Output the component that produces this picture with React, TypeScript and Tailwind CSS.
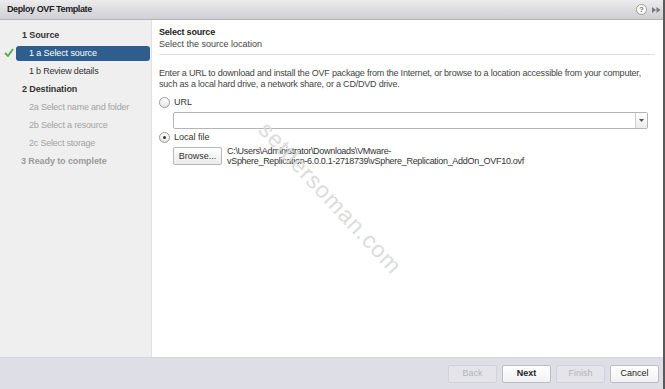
import React from "react";

const font = {
  fontFamily: '"Liberation Sans", Arial, sans-serif',
};

const steps = [
  { label: "1 Source", kind: "head" },
  { label: "1 a Select source", kind: "active" },
  { label: "1 b Review details", kind: "sub" },
  { label: "2 Destination", kind: "head" },
  { label: "2a Select name and folder", kind: "off" },
  { label: "2b Select a resource", kind: "off" },
  { label: "2c Select storage", kind: "off" },
  { label: "3 Ready to complete", kind: "headOff" },
];

const Step = ({ label, kind }: { label: string; kind: string }) => {
  if (kind === "active") {
    return (
      <div className="relative flex h-[18px] items-center">
        <svg className="absolute left-[4px] top-[4px]" width="10" height="9" viewBox="0 0 10 9">
          <path d="M1 5 L4 8 L9 1" fill="none" stroke="#4caf50" strokeWidth="1.8" />
        </svg>
        <div className="ml-[16px] flex h-[15px] w-[134px] items-center rounded-[3px] bg-[#2d5e8e] pl-[13px] tracking-[-0.1px] text-white">
          {label}
        </div>
      </div>
    );
  }
  const cls =
    kind === "head"
      ? "pl-[22px] font-bold tracking-[-0.1px] text-[#333]"
      : kind === "headOff"
        ? "pl-[21px] font-bold tracking-[-0.1px] text-[#9a9a9a]"
        : kind === "sub"
          ? "pl-[29px] tracking-[-0.2px] text-[#333]"
          : "pl-[29px] tracking-[-0.2px] text-[#a3a3a3]";
  return <div className={`flex h-[18px] items-center ${cls}`}>{label}</div>;
};

const Radio = ({ checked, label }: { checked?: boolean; label: string }) => (
  <div className="flex items-center gap-[4px]">
    <span className="flex h-[11px] w-[11px] items-center justify-center rounded-full border border-[#9a9a9a] bg-gradient-to-b from-white to-[#e6e6e6]">
      {checked && <span className="h-[3px] w-[3px] rounded-full bg-[#333]" />}
    </span>
    <span className="text-[#333]">{label}</span>
  </div>
);

const FooterButton = ({ label, disabled, bold }: { label: string; disabled?: boolean; bold?: boolean }) => (
  <div
    className={`flex h-[18px] w-[49px] items-center justify-center rounded-[2px] border ${
      disabled
        ? "border-[#d2d2da] bg-[#e4e4ea] text-[#b4b4b8]"
        : "border-[#bdbdc2] bg-gradient-to-b from-white to-[#f1f1f3] text-[#222]"
    } ${bold ? "font-bold" : ""}`}
  >
    {label}
  </div>
);

export default function App() {
  return (
    <div
      className="relative flex h-[389px] w-[665px] flex-col overflow-hidden border-r-2 border-[#5a5a5a] bg-white text-[9px] leading-[11px]"
      style={font}
    >
      {/* title bar */}
      <div className="flex h-[20px] shrink-0 items-center justify-between border-b border-[#b5b5b8] bg-gradient-to-b from-[#ececee] to-[#cfcfd4] pl-[7px] pr-[2px]">
        <span className="font-bold tracking-[-0.4px] text-[#222]">Deploy OVF Template</span>
        <div className="flex items-center gap-[5px]">
          <span className="flex h-[11px] w-[11px] items-center justify-center rounded-full border border-[#9a9a9a] bg-white text-[8px] font-bold leading-none text-[#777]">
            ?
          </span>
          <svg width="9" height="8" viewBox="0 0 9 8">
            <path d="M0 1 L4 4 L0 7 Z M4.5 1 L8.5 4 L4.5 7 Z" fill="#7a7a7a" />
          </svg>
        </div>
      </div>

      <div className="flex flex-1">
        {/* sidebar */}
        <div className="w-[152px] shrink-0 border-r border-[#e2e2e2] bg-[#efefef] pt-[6px]">
          {steps.map((s) => (
            <Step key={s.label} label={s.label} kind={s.kind} />
          ))}
        </div>

        {/* main */}
        <div className="flex-1 pl-[7px] pr-[8px] pt-[7px]">
          <div className="font-bold tracking-[-0.2px] text-[#222]">Select source</div>
          <div className="mt-[1px] text-[#444]">Select the source location</div>
          <div className="mt-[4px] border-t border-[#dedede]" />
          <p className="mt-[13px] whitespace-nowrap tracking-[-0.2px] text-[#444]">
            Enter a URL to download and install the OVF package from the Internet, or browse to a location
            accessible from your computer,
            <br />
            such as a local hard drive, a network share, or a CD/DVD drive.
          </p>
          <div className="mt-[7px]">
            <Radio label="URL" />
          </div>
          <div className="ml-[14px] mt-[4px] flex h-[17px] w-[475px] rounded-[2px] border border-[#b4b4b4] bg-white">
            <div className="flex-1" />
            <div className="flex w-[12px] items-center justify-center border-l border-[#cfcfcf] bg-gradient-to-b from-white to-[#ececec]">
              <svg width="5" height="3" viewBox="0 0 5 3">
                <path d="M0 0 H5 L2.5 3 Z" fill="#555" />
              </svg>
            </div>
          </div>
          <div className="mt-[3px]">
            <Radio checked label="Local file" />
          </div>
          <div className="ml-[14px] mt-[3px] flex items-center gap-[5px]">
            <div className="flex h-[18px] w-[49px] items-center justify-center rounded-[2px] border border-[#b8b8b8] bg-gradient-to-b from-white to-[#ececec] text-[#333]">
              Browse...
            </div>
            <div className="leading-[10px] tracking-[-0.3px] text-[#333]">
              C:\Users\Administrator\Downloads\VMware-
              <br />
              vSphere_Replication-6.0.0.1-2718739\vSphere_Replication_AddOn_OVF10.ovf
            </div>
          </div>
        </div>
      </div>

      {/* footer */}
      <div className="flex h-[32px] shrink-0 items-center justify-end gap-[5px] border-t border-[#d4d4dc] bg-[#dedee6] pr-[4px]">
        <FooterButton label="Back" disabled />
        <FooterButton label="Next" bold />
        <FooterButton label="Finish" disabled />
        <FooterButton label="Cancel" />
      </div>

      {/* watermark */}
      <div className="pointer-events-none absolute left-[233px] top-[183px] w-[190px] rotate-[47deg] text-center text-[23px] leading-[24px] tracking-[1px] text-[#dcdcdc]">
        settlersoman.com
      </div>
    </div>
  );
}
